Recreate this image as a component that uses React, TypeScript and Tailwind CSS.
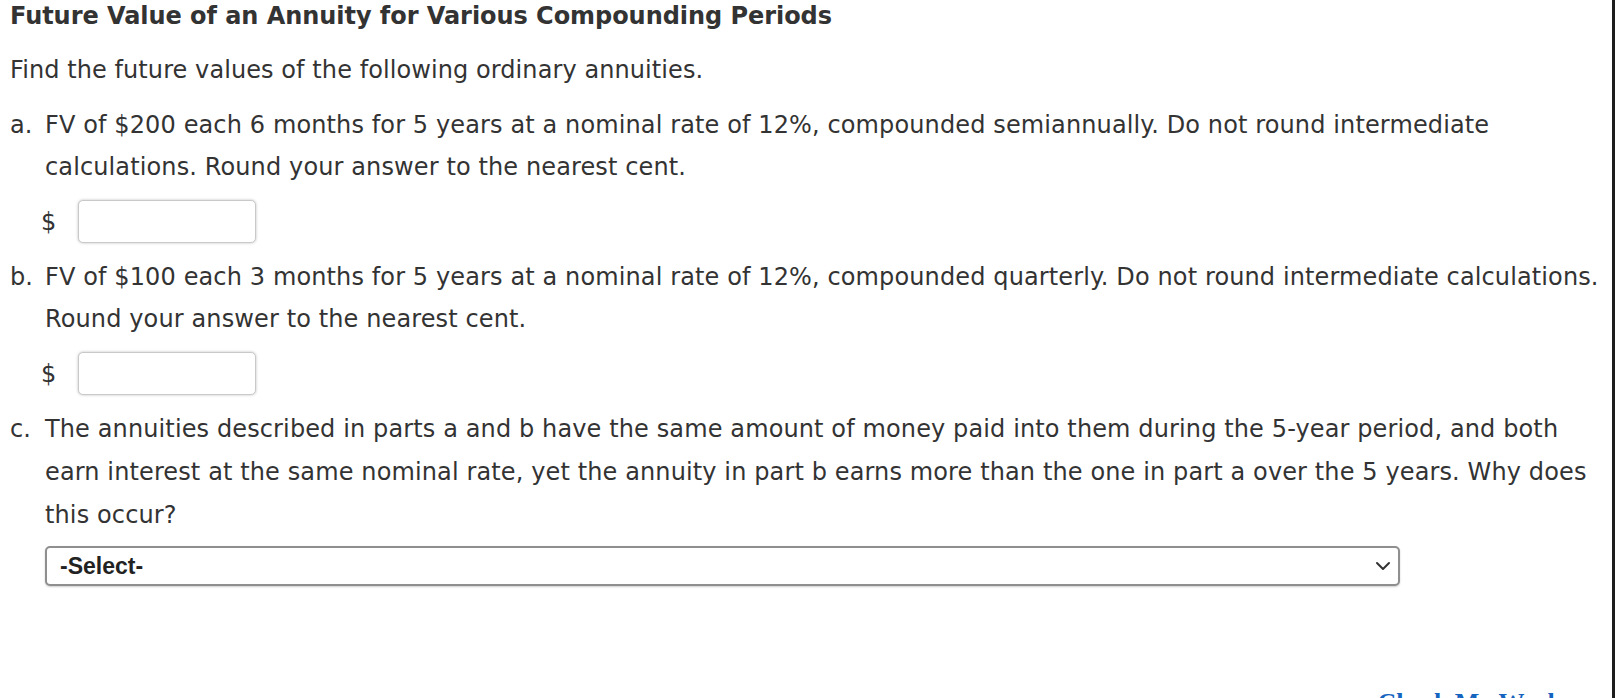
import { ChevronDown } from "lucide-react";

function AnswerBox() {
  return (
    <div className="mt-[12px] flex items-center pl-[31px]">
      <span className="w-[37px] text-[24px] leading-none">$</span>
      <div className="h-[43px] w-[178px] rounded-[5px] border border-[#c9c9c9] bg-white shadow-[0_0_3px_rgba(0,0,0,0.25)]" />
    </div>
  );
}

export default function App() {
  return (
    <div className="h-[698px] w-[1616px] overflow-hidden bg-white">
      <div
        className="h-[698px] w-[1615px] border-r-[3px] border-[#1c1c1c] pl-[10px] text-[#333333]"
        style={{ fontFamily: '"DejaVu Sans", Verdana, sans-serif' }}
      >
        <h1 className="text-[24px] font-bold leading-[32px] tracking-[-0.05px]">
          Future Value of an Annuity for Various Compounding Periods
        </h1>

        <p className="mt-[17px] text-[24px] leading-[42px] tracking-[0.08px]">
          Find the future values of the following ordinary annuities.
        </p>

        <div className="mt-[13px] flex text-[24px] leading-[42px] tracking-[0.12px]">
          <span className="w-[35px] shrink-0">a.</span>
          <span>
            FV of $200 each 6 months for 5 years at a nominal rate of 12%, compounded semiannually. Do not round intermediate
            <br />
            calculations. Round your answer to the nearest cent.
          </span>
        </div>
        <AnswerBox />

        <div className="mt-[13px] flex text-[24px] leading-[42px] tracking-[0.12px]">
          <span className="w-[35px] shrink-0">b.</span>
          <span className="whitespace-nowrap">
            FV of $100 each 3 months for 5 years at a nominal rate of 12%, compounded quarterly. Do not round intermediate calculations.
            <br />
            Round your answer to the nearest cent.
          </span>
        </div>
        <AnswerBox />

        <div className="mt-[13px] flex text-[24px] leading-[43px] tracking-[0.12px]">
          <span className="w-[35px] shrink-0">c.</span>
          <span className="whitespace-nowrap">
            The annuities described in parts a and b have the same amount of money paid into them during the 5-year period, and both
            <br />
            earn interest at the same nominal rate, yet the annuity in part b earns more than the one in part a over the 5 years. Why does
            <br />
            this occur?
          </span>
        </div>

        <div className="ml-[35px] mt-[9px] flex h-[40px] w-[1355px] items-center justify-between rounded-[5px] border-2 border-[#8f8f8f] bg-white pl-[13px] pr-[3px] shadow-[0_1px_2px_rgba(0,0,0,0.2)]">
          <span
            className="text-[23px] font-bold text-[#222222]"
            style={{ fontFamily: '"Liberation Sans", Arial, sans-serif' }}
          >
            -Select-
          </span>
          <ChevronDown className="h-[24px] w-[24px] text-[#333333]" strokeWidth={2} />
        </div>

        <div className="mt-[104px] flex justify-end pr-[50px]">
          <span
            className="text-[26px] font-bold leading-none text-[#1565c0]"
            style={{ fontFamily: '"Liberation Serif", "Times New Roman", serif' }}
          >
            Check My Work
          </span>
        </div>
      </div>
    </div>
  );
}
